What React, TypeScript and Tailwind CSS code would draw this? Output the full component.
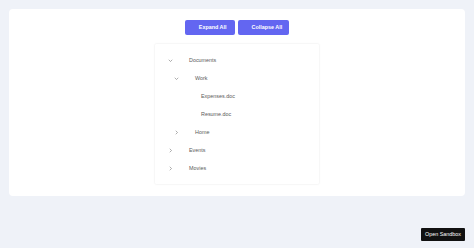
import React, { useState } from 'react';

type Node = { id: string; label: string; children?: Node[] };

const TREE: Node[] = [
  {
    id: 'documents',
    label: 'Documents',
    children: [
      {
        id: 'work',
        label: 'Work',
        children: [
          { id: 'expenses', label: 'Expenses.doc' },
          { id: 'resume', label: 'Resume.doc' }
        ]
      },
      { id: 'home', label: 'Home', children: [{ id: 'h1', label: 'Notes.txt' }] }
    ]
  },
  { id: 'events', label: 'Events', children: [{ id: 'e1', label: 'Meeting.ics' }] },
  { id: 'movies', label: 'Movies', children: [{ id: 'm1', label: 'Trailer.mp4' }] }
];

const ALL_IDS = ['documents', 'work', 'home', 'events', 'movies'];

const Chevron: React.FC<{ open: boolean }> = ({ open }) => (
  <svg width="5" height="5" viewBox="0 0 10 10" className="text-[#777]">
    {open ? (
      <polyline points="1.5,3.5 5,7 8.5,3.5" fill="none" stroke="currentColor" strokeWidth="1.2" />
    ) : (
      <polyline points="3.5,1.5 7,5 3.5,8.5" fill="none" stroke="currentColor" strokeWidth="1.2" />
    )}
  </svg>
);

const TreeRow: React.FC<{ node: Node; depth: number; expanded: string[]; toggle: (id: string) => void }> = ({
  node,
  depth,
  expanded,
  toggle
}) => {
  const open = expanded.includes(node.id);
  const hasChildren = !!node.children?.length;
  return (
    <>
      <div
        className="flex h-[18px] items-center cursor-pointer"
        style={{ paddingLeft: 12 + depth * 6 }}
        onClick={() => hasChildren && toggle(node.id)}
      >
        <span className="flex w-[6px] justify-center">{hasChildren ? <Chevron open={open} /> : null}</span>
        <span className="ml-[16px] text-[5.4px] text-[#5a5a5a]">{node.label}</span>
      </div>
      {hasChildren &&
        open &&
        node.children!.map((c) => (
          <TreeRow key={c.id} node={c} depth={depth + 1} expanded={expanded} toggle={toggle} />
        ))}
    </>
  );
};

export default function App() {
  const [expanded, setExpanded] = useState<string[]>(['documents', 'work']);

  const toggle = (id: string) =>
    setExpanded((prev) => (prev.includes(id) ? prev.filter((x) => x !== id) : [...prev, id]));

  return (
    <div className="relative min-h-[248px] bg-[#eff2f8] p-[9px] font-['Liberation_Sans',Arial,sans-serif]">
      <div className="flex flex-col items-center rounded-[4px] bg-white pt-[11px] pb-[12px]">
        <div className="flex gap-[3px]">
          <button
            type="button"
            onClick={() => setExpanded(ALL_IDS)}
            className="h-[15px] rounded-[2px] bg-[#6366f1] pl-[14px] pr-[8px] text-[5.4px] font-bold text-white"
          >
            Expand All
          </button>
          <button
            type="button"
            onClick={() => setExpanded([])}
            className="h-[15px] rounded-[2px] bg-[#6366f1] pl-[14px] pr-[7px] text-[5.4px] font-bold text-white"
          >
            Collapse All
          </button>
        </div>
        <div className="mt-[9px] w-[164px] rounded-[1px] bg-white py-[7px] shadow-[0_0_2px_rgba(0,0,0,0.12)]">
          {TREE.map((n) => (
            <TreeRow key={n.id} node={n} depth={0} expanded={expanded} toggle={toggle} />
          ))}
        </div>
      </div>
      <button
        type="button"
        className="absolute bottom-[7px] right-[9px] h-[13px] rounded-[1px] bg-[#111] px-[4px] text-[5.4px] text-white"
      >
        Open Sandbox
      </button>
    </div>
  );
}
